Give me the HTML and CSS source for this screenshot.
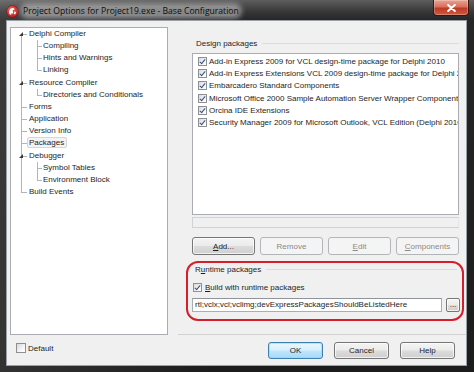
FILE: index.html
```html
<!DOCTYPE html>
<html>
<head>
<meta charset="utf-8">
<title>Project Options</title>
<link rel="stylesheet" href="styles.css">
</head>
<body>
<div class="window">
  <header class="titlebar">
    <span class="app-icon">
      <svg width="13" height="13" viewBox="0 0 13 13">
        <defs>
          <radialGradient id="ig" cx="40%" cy="35%" r="70%">
            <stop offset="0" stop-color="#f26a5a"/>
            <stop offset="1" stop-color="#b4161c"/>
          </radialGradient>
        </defs>
        <circle cx="6.5" cy="6.5" r="6" fill="url(#ig)" stroke="#7a1010" stroke-width=".6"/>
        <path d="M3 7.2 C3 4.2 5.2 2.6 7.6 3 L8.8 4.6 L6.6 5.1 L7.2 8.6 L5.6 8.2 L5 9.8 L3.6 9.2 Z" fill="#fff"/>
        <path d="M8.4 6.4 L10.2 7 L9.2 9.4 L7.8 9 Z" fill="#fff"/>
      </svg>
    </span>
    <span class="title">Project Options for Project19.exe - Base Configuration</span>
    <span class="close">
      <svg width="9" height="8" viewBox="0 0 9 8"><path d="M1.2 1 L7.8 7 M7.8 1 L1.2 7" stroke="#fff" stroke-width="2" stroke-linecap="round"/></svg>
    </span>
  </header>

  <div class="client">
    <div class="content">
      <nav class="tree-panel">
        <ul class="tree">
          <li class="root first">
            <span class="exp"></span><span class="lbl">Delphi Compiler</span>
            <ul class="sub">
              <li><span class="lbl">Compiling</span></li>
              <li><span class="lbl">Hints and Warnings</span></li>
              <li class="last"><span class="lbl">Linking</span></li>
            </ul>
          </li>
          <li class="root">
            <span class="exp"></span><span class="lbl">Resource Compiler</span>
            <ul class="sub">
              <li class="last"><span class="lbl">Directories and Conditionals</span></li>
            </ul>
          </li>
          <li class="root"><span class="lbl">Forms</span></li>
          <li class="root"><span class="lbl">Application</span></li>
          <li class="root"><span class="lbl">Version Info</span></li>
          <li class="root"><span class="lbl sel">Packages</span></li>
          <li class="root">
            <span class="exp"></span><span class="lbl">Debugger</span>
            <ul class="sub">
              <li><span class="lbl">Symbol Tables</span></li>
              <li class="last"><span class="lbl">Environment Block</span></li>
            </ul>
          </li>
          <li class="root last"><span class="lbl">Build Events</span></li>
        </ul>
      </nav>

      <section class="options">
        <div class="group-title"><span>Design packages</span><i class="gline"></i></div>
        <div class="listbox">
          <div class="item"><span class="cb on"></span><span class="txt">Add-in Express 2009 for VCL design-time package for Delphi 2010</span></div>
          <div class="item"><span class="cb on"></span><span class="txt">Add-in Express Extensions VCL 2009 design-time package for Delphi 2010</span></div>
          <div class="item"><span class="cb on"></span><span class="txt">Embarcadero Standard Components</span></div>
          <div class="item"><span class="cb on"></span><span class="txt">Microsoft Office 2000 Sample Automation Server Wrapper Components</span></div>
          <div class="item"><span class="cb on"></span><span class="txt">Orcina IDE Extensions</span></div>
          <div class="item"><span class="cb on"></span><span class="txt">Security Manager 2009 for Microsoft Outlook, VCL Edition (Delphi 2010)</span></div>
        </div>
        <div class="desc"></div>
        <div class="btn-row">
          <button class="btn"><u>A</u>dd...</button>
          <button class="btn disabled">Remove</button>
          <button class="btn disabled"><u>E</u>dit</button>
          <button class="btn disabled"><u>C</u>omponents</button>
        </div>

        <div class="runtime">
          <div class="group-title rt"><span>R<u>u</u>ntime packages</span><i class="gline"></i></div>
          <div class="check-row"><span class="cb on"></span><span><u>B</u>uild with runtime packages</span></div>
          <div class="edit-row">
            <div class="edit">rtl;vclx;vcl;vclimg;devExpressPackagesShouldBeListedHere</div>
            <button class="btn small">...</button>
          </div>
        </div>
      </section>
    </div>

    <footer class="footer">
      <div class="check-row def"><span class="cb"></span><span>Default</span></div>
      <div class="actions">
        <button class="btn default">OK</button>
        <button class="btn">Cancel</button>
        <button class="btn">Help</button>
      </div>
    </footer>
  </div>
</div>
</body>
</html>
```

FILE: styles.css
```css
* { box-sizing: border-box; }

html, body {
  margin: 0;
  padding: 0;
}

body {
  width: 474px;
  height: 372px;
  overflow: hidden;
  font-family: "Liberation Sans", Arial, sans-serif;
  font-size: 8px;
  color: #1e1e1e;
  background: #222;
}

u { text-decoration: underline; text-underline-offset: 1px; }

.window {
  width: 474px;
  height: 372px;
  display: flex;
  flex-direction: column;
  background:
    linear-gradient(90deg, rgba(255,255,255,0.10) 0, rgba(255,255,255,0) 45%),
    linear-gradient(180deg, #5e5e5e 0, #363636 12px, #262626 20px, #1c1c1c 100%);
}

/* ---------- title bar ---------- */
.titlebar {
  height: 20px;
  flex: none;
  display: flex;
  align-items: center;
  padding-left: 6px;
}

.app-icon {
  width: 13px;
  height: 13px;
  display: flex;
  margin-top: 2px;
}

.title {
  margin-left: 4px;
  margin-top: 2px;
  font-family: "Open Sans", "Liberation Sans", sans-serif;
  font-size: 8.6px;
  color: #0c0c0c;
  background: rgba(200, 200, 200, 0.55);
  box-shadow: 0 0 5px 3px rgba(200, 200, 200, 0.55);
  border-radius: 6px;
  line-height: 10px;
  white-space: nowrap;
}

.close {
  margin-left: auto;
  margin-right: 5px;
  align-self: flex-start;
  width: 36px;
  height: 16px;
  display: flex;
  align-items: center;
  justify-content: center;
  border: 1px solid #3b1610;
  border-top: none;
  border-radius: 0 0 4px 4px;
  background: linear-gradient(180deg, #e9a394 0, #d9705c 45%, #be3a22 55%, #cf5a3e 100%);
  box-shadow: inset 0 0 0 1px rgba(255,255,255,0.25);
}

/* ---------- client ---------- */
.client {
  flex: 1;
  margin: 0 7px 6px 6px;
  background: #f0f0f0;
  border: 1px solid #9aa0a6;
  display: flex;
  flex-direction: column;
}

.content {
  display: flex;
  height: 314px;
  padding: 6px 0 0 3px;
}

/* ---------- tree ---------- */
.tree-panel {
  width: 158px;
  height: 308px;
  background: #fff;
  border: 1px solid #a9acb2;
}

.tree, .sub {
  list-style: none;
  margin: 0;
  padding: 0;
}

.tree li {
  position: relative;
  line-height: 12.15px;
  white-space: nowrap;
}

.tree .root { padding-left: 18px; }

.tree li::before {
  content: "";
  position: absolute;
  top: 0;
  height: 100%;
  border-left: 1px solid #b4b4b4;
}

.tree li::after {
  content: "";
  position: absolute;
  top: 6px;
  border-top: 1px solid #b4b4b4;
}

.tree .root::before { left: 10px; }
.tree .root::after { left: 10px; width: 6px; }
.tree .root.first::before { top: 6px; height: calc(100% - 6px); }
.tree .root.last::before { height: 6px; }

.sub li { padding-left: 14px; }
.sub li::before { left: 8px; }
.sub li::after { left: 8px; width: 5px; }
.sub li.last::before { height: 6px; }

.exp {
  position: absolute;
  left: 8px;
  top: 4px;
  width: 0;
  height: 0;
  border-left: 4px solid transparent;
  border-bottom: 4px solid #3a3a3a;
  z-index: 1;
}

.lbl { color: #1e1e1e; }

.lbl.sel {
  margin-left: -2px;
  padding: 0 2px 0 1px;
  border: 1px solid #d6d6d6;
  background: #f3f3f3;
  border-radius: 2px;
}

/* ---------- options column ---------- */
.options {
  width: 288px;
  height: 308px;
  margin-left: 10px;
  padding: 10px 7px 0 14px;
  border-bottom: 1px solid #d2d2d2;
  display: flex;
  flex-direction: column;
}

.group-title {
  height: 12px;
  display: flex;
  align-items: center;
  white-space: nowrap;
}

.group-title span { margin-left: 4px; }

.gline {
  flex: 1;
  margin-left: 5px;
  border-top: 1px solid #d5dde3;
  height: 0;
}

.listbox {
  margin-top: 4px;
  height: 162px;
  background: #fff;
  border: 1px solid #a9acb2;
  padding: 1px 0 0 5px;
  overflow: hidden;
}

.item {
  height: 12.3px;
  display: flex;
  align-items: center;
  white-space: nowrap;
}

.item .txt { margin-left: 2px; }

.cb {
  flex: none;
  width: 9px;
  height: 9px;
  border: 1px solid #8e8f90;
  background: linear-gradient(135deg, #d6d8da 0, #f4f5f6 60%, #fff 100%);
  position: relative;
}

.cb.on::after {
  content: "";
  position: absolute;
  left: 2px;
  top: 0px;
  width: 2px;
  height: 5px;
  border-right: 1.5px solid #344e86;
  border-bottom: 1.5px solid #344e86;
  transform: rotate(40deg);
}

.desc {
  margin-top: 2px;
  height: 11px;
  border: 1px solid #d0d3d6;
  border-right-color: #e6e6e6;
}

.btn-row {
  margin-top: 9px;
  display: grid;
  grid-template-columns: repeat(4, 63px);
  column-gap: 5px;
}

.btn {
  height: 18px;
  padding: 0;
  font-family: "Liberation Sans", Arial, sans-serif;
  font-size: 8px;
  color: #1e1e1e;
  border: 1px solid #767676;
  border-radius: 3px;
  background: linear-gradient(180deg, #f4f4f4 0, #ebebeb 48%, #dcdcdc 52%, #cfcfcf 100%);
  box-shadow: inset 0 0 0 1px rgba(255,255,255,0.7);
}

.btn.disabled {
  color: #8a8a8a;
  border-color: #b3b6b9;
  background: #f4f4f4;
  box-shadow: none;
}

/* ---------- runtime group (annotated) ---------- */
.runtime {
  margin: 6px -5px 0 -6px;
  height: 60px;
  border: 2px solid #d61e2b;
  border-radius: 12px;
  padding: 0 2px 0 4px;
}

.group-title.rt span { margin-left: 3px; }
.group-title.rt .gline { margin-right: 3px; }

.check-row {
  margin-top: 6px;
  height: 12px;
  display: flex;
  align-items: center;
  white-space: nowrap;
}

.check-row .cb { margin-left: 1px; margin-right: 3px; }

.edit-row {
  margin-top: 5px;
  display: flex;
  gap: 4px;
}

.edit {
  flex: 1;
  height: 14px;
  background: #fff;
  border: 1px solid #abadb3;
  border-top-color: #8f939a;
  padding-left: 2px;
  line-height: 12px;
  white-space: nowrap;
  overflow: hidden;
}

.btn.small {
  width: 14px;
  height: 14px;
  font-size: 8px;
  line-height: 10px;
  border-radius: 2px;
}

/* ---------- footer ---------- */
.footer {
  flex: 1;
  display: flex;
  align-items: flex-start;
  padding: 7px 11px 0 9px;
}

.check-row.def { margin-top: 0; }
.check-row.def .cb { width: 10px; height: 10px; margin-left: 0; margin-right: 2px; }

.actions {
  margin-left: auto;
  display: flex;
  gap: 11px;
}

.actions .btn {
  width: 55px;
  height: 17px;
}

.btn.default {
  border-color: #3c7fb1;
  background: linear-gradient(180deg, #eaf6fd 0, #d9f0fc 48%, #bee6fd 52%, #a7d9f5 100%);
  box-shadow: inset 0 0 0 1px rgba(140, 220, 255, 0.6);
}
```
